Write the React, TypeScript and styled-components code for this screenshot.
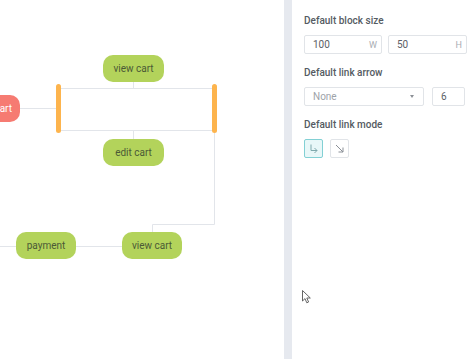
import { createGlobalStyle, styled } from 'styled-components';

const GlobalStyle = createGlobalStyle`
  html, body {
    margin: 0;
    padding: 0;
    background: #fff;
    font-family: Roboto, 'Liberation Sans', sans-serif;
  }
  #root {
    height: 359px;
  }
`;

const Page = styled.div`
  display: flex;
  height: 359px;
  position: relative;
  overflow: hidden;
`;

const Canvas = styled.div`
  position: relative;
  width: 284px;
  flex-shrink: 0;
  background: #fff;
  overflow: hidden;
`;

const Links = styled.svg`
  position: absolute;
  inset: 0;
`;

const Node = styled.div<{ $x: number; $y: number; $w: number; $red?: boolean }>`
  position: absolute;
  left: ${(p) => p.$x}px;
  top: ${(p) => p.$y}px;
  width: ${(p) => p.$w}px;
  height: 27px;
  border-radius: 10px;
  background: ${(p) => (p.$red ? '#f67b72' : '#b3d35b')};
  color: ${(p) => (p.$red ? '#fff' : '#4b5a36')};
  font-size: 10px;
  display: flex;
  align-items: center;
  justify-content: ${(p) => (p.$red ? 'flex-end' : 'center')};
  padding-right: ${(p) => (p.$red ? '8px' : '0')};
  box-sizing: border-box;
`;

const Handle = styled.div<{ $x: number }>`
  position: absolute;
  left: ${(p) => p.$x}px;
  top: 84px;
  width: 5px;
  height: 49px;
  border-radius: 3px;
  background: #fdb44d;
`;

const Divider = styled.div`
  width: 8px;
  flex-shrink: 0;
  background: #e6e9ef;
`;

const Panel = styled.div`
  flex: 1;
  padding: 14px 7px 0 12px;
`;

const Section = styled.div`
  margin-bottom: 12px;
`;

const Label = styled.div`
  font-size: 10px;
  line-height: 13px;
  font-weight: 500;
  color: #555b62;
  margin-bottom: 8px;
`;

const Row = styled.div<{ $gap: number }>`
  display: flex;
  gap: ${(p) => p.$gap}px;
`;

const Field = styled.div<{ $w: number }>`
  width: ${(p) => p.$w}px;
  height: 19px;
  box-sizing: border-box;
  border: 1px solid #e1e4e8;
  border-radius: 2px;
  display: flex;
  align-items: center;
  justify-content: space-between;
  padding: 0 4px 0 8px;
  font-size: 10px;
  color: #5c6066;
`;

const Unit = styled.span`
  color: #a9adb3;
  font-size: 9px;
`;

const Placeholder = styled.span`
  color: #9ea3a9;
`;

const Caret = styled.span`
  width: 0;
  height: 0;
  border-left: 2.5px solid transparent;
  border-right: 2.5px solid transparent;
  border-top: 3px solid #8c9096;
  margin-right: 5px;
`;

const ModeButton = styled.div<{ $active?: boolean }>`
  width: 19px;
  height: 19px;
  box-sizing: border-box;
  border: 1px solid ${(p) => (p.$active ? '#82d0d4' : '#e1e4e8')};
  background: ${(p) => (p.$active ? '#e8f7f8' : '#fff')};
  border-radius: 2px;
  display: flex;
  align-items: center;
  justify-content: center;
`;

const Cursor = styled.svg`
  position: absolute;
  left: 302px;
  top: 290px;
`;

export default function App() {
  const line = '#e2e5ea';
  return (
    <>
      <GlobalStyle />
      <Page>
        <Canvas>
          <Links width="284" height="359">
            <g stroke={line} strokeWidth="1" fill="none">
              <path d="M20 108.5H56" />
              <path d="M61 88.5H212M61 130.5H212" />
              <path d="M133.5 82V88M133.5 131V139" />
              <path d="M214.5 133V224.5H152.5V232" />
              <path d="M0 246.5H16M76 246.5H122" />
            </g>
          </Links>
          <Node $x={-40} $y={95} $w={60} $red>
            art
          </Node>
          <Node $x={103} $y={55} $w={61}>view cart</Node>
          <Handle $x={56} />
          <Handle $x={212} />
          <Node $x={103} $y={139} $w={61}>edit cart</Node>
          <Node $x={16} $y={232} $w={60}>payment</Node>
          <Node $x={122} $y={232} $w={60}>view cart</Node>
        </Canvas>
        <Divider />
        <Panel>
          <Section>
            <Label>Default block size</Label>
            <Row $gap={6}>
              <Field $w={78}>
                100<Unit>W</Unit>
              </Field>
              <Field $w={79}>
                50<Unit>H</Unit>
              </Field>
            </Row>
          </Section>
          <Section>
            <Label>Default link arrow</Label>
            <Row $gap={8}>
              <Field $w={120}>
                <Placeholder>None</Placeholder>
                <Caret />
              </Field>
              <Field $w={33}>6</Field>
            </Row>
          </Section>
          <Section>
            <Label>Default link mode</Label>
            <Row $gap={7}>
              <ModeButton $active>
                <svg width="11" height="11" viewBox="0 0 11 11" fill="none" stroke="#7fa9ad" strokeWidth="1">
                  <path d="M3 1.5V7.5H9M6.5 5L9 7.5L6.5 10" />
                </svg>
              </ModeButton>
              <ModeButton>
                <svg width="11" height="11" viewBox="0 0 11 11" fill="none" stroke="#8a8f96" strokeWidth="1">
                  <path d="M2 2L9 9M9 4.5V9H4.5" />
                </svg>
              </ModeButton>
            </Row>
          </Section>
        </Panel>
        <Cursor width="10" height="14" viewBox="0 0 10 14">
          <path d="M0.5 0.5V11L3 8.6L4.8 12.8L6.6 12L4.8 8H8.3Z" fill="#fff" stroke="#555" strokeWidth="0.9" />
        </Cursor>
      </Page>
    </>
  );
}
